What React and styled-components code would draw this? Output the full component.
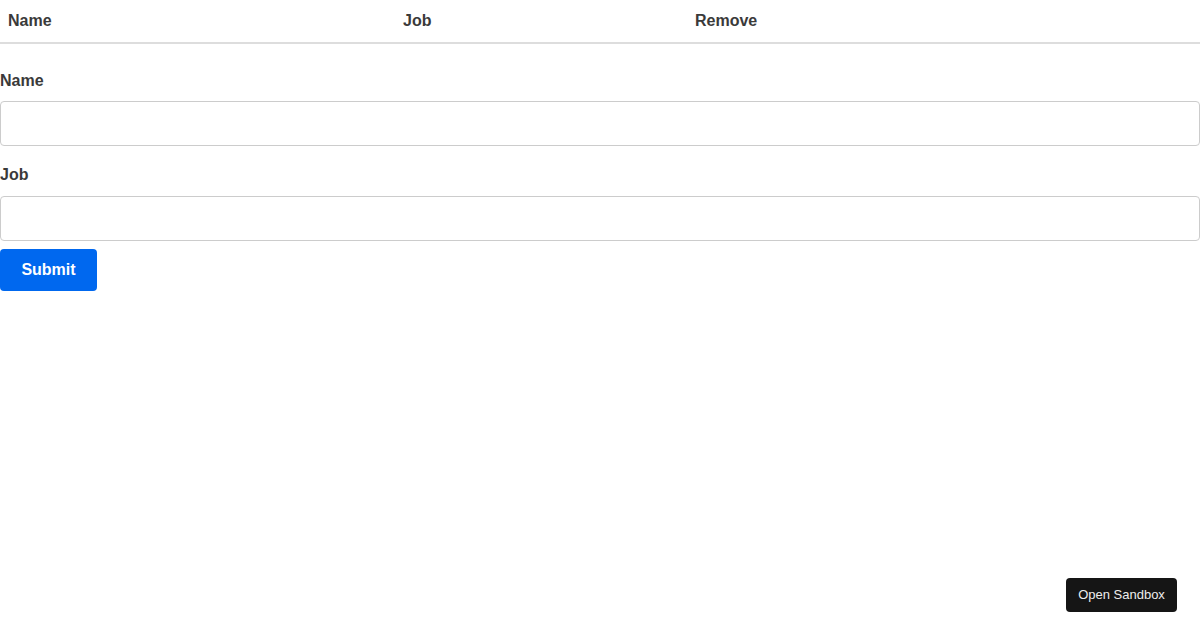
import React, { useState } from "react";
import styled, { createGlobalStyle } from "styled-components";

const GlobalStyle = createGlobalStyle`
  * {
    box-sizing: border-box;
  }
  body {
    margin: 0;
    background: #fff;
    font-family: "Liberation Sans", Arial, sans-serif;
    color: #3a3a3a;
  }
`;

const Page = styled.div`
  width: 1200px;
  min-height: 630px;
`;

const HeaderRow = styled.div`
  display: grid;
  grid-template-columns: 395px 292px 1fr;
  height: 44px;
  border-bottom: 2px solid #dddddd;
`;

const HeaderCell = styled.div`
  display: flex;
  align-items: center;
  padding: 0 8px;
  font-size: 16px;
  font-weight: 700;
  color: #3a3a3a;
`;

const Form = styled.form`
  display: flex;
  flex-direction: column;
  padding-top: 27px;
`;

const Label = styled.label`
  display: block;
  font-size: 16px;
  font-weight: 700;
  line-height: 20px;
  color: #3a3a3a;
  margin-bottom: ${(p) => p.$gap}px;
`;

const Input = styled.input`
  width: 100%;
  height: 45px;
  border: 1px solid #cccccc;
  border-radius: 4px;
  padding: 0 12px;
  font-size: 16px;
  font-family: inherit;
  margin-bottom: ${(p) => p.$gap}px;
  outline: none;
`;

const SubmitButton = styled.button`
  align-self: flex-start;
  width: 97px;
  height: 42px;
  border: none;
  border-radius: 4px;
  background: #0068ef;
  color: #fff;
  font-family: inherit;
  font-size: 16px;
  font-weight: 700;
  cursor: pointer;
`;

const SandboxButton = styled.button`
  position: fixed;
  right: 23px;
  bottom: 18px;
  width: 111px;
  height: 34px;
  padding: 0 0 2px;
  border: none;
  border-radius: 4px;
  background: #151515;
  color: #ededed;
  font-family: "Liberation Sans", Arial, sans-serif;
  font-size: 13px;
  cursor: pointer;
`;

const columns = ["Name", "Job", "Remove"];

const App = () => {
  const [name, setName] = useState("");
  const [job, setJob] = useState("");

  return (
    <Page>
      <GlobalStyle />
      <HeaderRow>
        {columns.map((c) => (
          <HeaderCell key={c}>{c}</HeaderCell>
        ))}
      </HeaderRow>
      <Form onSubmit={(e) => e.preventDefault()}>
        <Label htmlFor="name" $gap={10}>
          Name
        </Label>
        <Input
          id="name"
          value={name}
          onChange={(e) => setName(e.target.value)}
          $gap={19}
        />
        <Label htmlFor="job" $gap={11}>
          Job
        </Label>
        <Input
          id="job"
          value={job}
          onChange={(e) => setJob(e.target.value)}
          $gap={8}
        />
        <SubmitButton type="submit">Submit</SubmitButton>
      </Form>
      <SandboxButton>Open Sandbox</SandboxButton>
    </Page>
  );
};

export default App;
